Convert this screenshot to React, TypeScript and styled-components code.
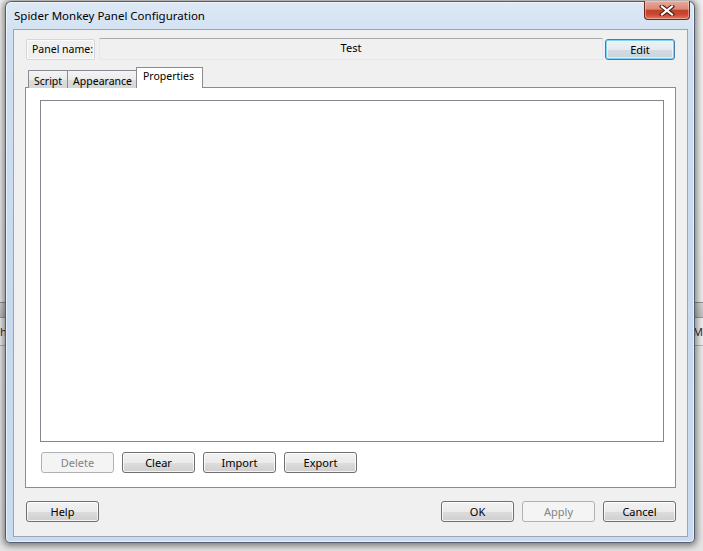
import React from 'react'
import styled, { createGlobalStyle, css } from 'styled-components'

const GlobalStyle = createGlobalStyle`
  *, *::before, *::after {
    box-sizing: border-box;
  }
  html, body {
    margin: 0;
    padding: 0;
  }
  body {
    background: #e6e6e6;
    font-family: "Noto Sans", "Open Sans", sans-serif;
  }
`

const uiFont = `"Noto Sans", "Open Sans", sans-serif`

const Desktop = styled.div`
  position: relative;
  width: 703px;
  height: 551px;
  overflow: hidden;
  background: linear-gradient(#efefef, #e4e4e4);
  display: flex;
  flex-direction: column;
`

const BackdropToolbar = styled.div`
  margin-top: 302px;
  height: 16px;
  background: linear-gradient(#d2d2d2, #bdbdbd);
  border-top: 1px solid #8e8e8e;
  border-bottom: 1px solid #9a9a9a;
`

const BackdropRow = styled.div`
  height: 28px;
  display: flex;
  align-items: center;
  justify-content: space-between;
  background: #ececec;
  border-bottom: 1px solid #b5b5b5;
  font-family: ${uiFont};
  font-size: 11px;
  color: #30243c;
`

const Window = styled.div`
  position: absolute;
  left: 5px;
  top: 1px;
  width: 690px;
  height: 542px;
  border: 1px solid rgba(40, 50, 60, 0.75);
  border-radius: 6px 6px 5px 5px;
  background: linear-gradient(180deg, #dde8f5 0px, #cfdff1 40px, #c6d9ef 300px, #c9dbf0 100%);
  box-shadow: 0 1px 6px 2px rgba(0, 0, 0, 0.45), inset 0 0 0 1px rgba(255, 255, 255, 0.6);
  padding: 0 6px 5px 7px;
  display: flex;
  flex-direction: column;
`

const TitleBar = styled.div`
  height: 27px;
  flex-shrink: 0;
  display: flex;
  align-items: flex-start;
`

const TitleText = styled.span`
  font-family: ${uiFont};
  font-size: 11.5px;
  color: #000;
  margin: 6px 0 0 1px;
  white-space: nowrap;
`

const CloseButton = styled.div`
  margin-left: auto;
  margin-right: -2px;
  margin-top: -1px;
  width: 46px;
  height: 19px;
  border: 1px solid #6b2a1f;
  border-top: none;
  border-radius: 0 0 4px 4px;
  background: linear-gradient(180deg, #e9a99a 0%, #d98a76 45%, #c0412a 52%, #c9482f 75%, #e07a5e 100%);
  box-shadow: inset 0 0 0 1px rgba(255, 220, 210, 0.45);
  display: flex;
  align-items: center;
  justify-content: center;
`

const Client = styled.div`
  flex: 1;
  background: #f0f0f0;
  border: 1px solid #99a6b6;
  display: flex;
  flex-direction: column;
  padding: 8px 11px 14px 11px;
  font-family: ${uiFont};
  font-size: 11px;
  color: #000;
`

const NameRow = styled.div`
  display: flex;
  align-items: center;
  padding-left: 1px;
  height: 22px;
`

const NameLabel = styled.div`
  width: 69px;
  height: 21px;
  border: 1px solid #d3d7db;
  border-radius: 2px;
  box-shadow: inset 0 0 0 1px #fbfbfb;
  display: flex;
  align-items: center;
  padding-left: 5px;
  margin-right: 4px;
  font-size: 10.5px;
  white-space: nowrap;
  flex-shrink: 0;
`

const NameField = styled.div`
  flex: 1;
  height: 22px;
  border: 1px solid #e3e9ef;
  border-top-color: #a9abb0;
  background: #f0f0f0;
  display: flex;
  align-items: center;
  justify-content: center;
  padding-bottom: 3px;
  font-size: 11px;
`

const Button = styled.button<{ $disabled?: boolean; $default?: boolean; $w?: number }>`
  width: ${p => p.$w ?? 73}px;
  height: 21px;
  padding: 0;
  font-family: ${uiFont};
  font-size: 11px;
  color: #000;
  border: 1px solid #707070;
  border-radius: 3px;
  background: linear-gradient(180deg, #f2f2f2 0%, #ebebeb 50%, #dddddd 51%, #cfcfcf 100%);
  box-shadow: inset 0 0 0 1px rgba(255, 255, 255, 0.75);
  display: flex;
  align-items: center;
  justify-content: center;
  flex-shrink: 0;

  ${p => p.$default && css`
    border-color: #3c7fb1;
    box-shadow: inset 0 0 0 1px #7fd3f5, inset 0 0 0 2px rgba(255, 255, 255, 0.5);
    background: linear-gradient(180deg, #eef3f6 0%, #e4eaee 50%, #d4dce2 51%, #c9d3da 100%);
  `}

  ${p => p.$disabled && css`
    border-color: #adb2b5;
    background: #f4f4f4;
    box-shadow: none;
    color: #838383;
  `}
`

const EditButton = styled(Button)`
  margin-left: 2px;
  margin-right: 1px;
`

const TabArea = styled.div`
  flex: 1;
  display: flex;
  flex-direction: column;
  margin-top: 7px;
`

const TabStrip = styled.div`
  display: flex;
  align-items: flex-end;
  height: 21px;
  padding-left: 3px;
  position: relative;
  z-index: 1;
  margin-bottom: -1px;
`

const Tab = styled.div<{ $active?: boolean }>`
  height: 18px;
  border: 1px solid #898c95;
  border-bottom: none;
  background: linear-gradient(180deg, #f4f4f4 0%, #ebebeb 50%, #dddddd 51%, #d6d6d6 100%);
  padding: 2px 5px 0 5px;
  margin-right: -1px;
  display: flex;
  align-items: center;
  font-size: 10.5px;
  white-space: nowrap;

  ${p => p.$active && css`
    height: 21px;
    background: #ffffff;
    margin-left: -1px;
    padding: 0 8px 4px 6px;
  `}
`

const TabPanel = styled.div`
  flex: 1;
  border: 1px solid #898c95;
  background: #ffffff;
  display: flex;
  flex-direction: column;
  padding: 12px 11px 14px 14px;
`

const ListBox = styled.div`
  flex: 1;
  border: 1px solid #828790;
  background: #ffffff;
`

const ButtonRow = styled.div`
  display: flex;
  gap: 8px;
  margin-top: 10px;
  padding-left: 1px;
`

const Footer = styled.div`
  display: flex;
  align-items: center;
  margin-top: 13px;
  padding-left: 1px;
`

const FooterRight = styled.div`
  margin-left: auto;
  display: flex;
  gap: 8px;
`

const CloseGlyph = () => (
  <svg width="16" height="11" viewBox="0 0 16 11">
    <path d="M3 1.5 L13 9.5 M13 1.5 L3 9.5" stroke="#4a1a12" strokeWidth="4.2" strokeLinecap="square" fill="none" />
    <path d="M3 1.5 L13 9.5 M13 1.5 L3 9.5" stroke="#ffffff" strokeWidth="2.2" strokeLinecap="square" fill="none" />
  </svg>
)

export default function App() {
  return (
    <>
      <GlobalStyle />
      <Desktop>
        <BackdropToolbar />
        <BackdropRow>
          <span>h</span>
          <span>M</span>
        </BackdropRow>

        <Window>
          <TitleBar>
            <TitleText>Spider Monkey Panel Configuration</TitleText>
            <CloseButton>
              <CloseGlyph />
            </CloseButton>
          </TitleBar>

          <Client>
            <NameRow>
              <NameLabel>Panel name:</NameLabel>
              <NameField>Test</NameField>
              <EditButton $default $w={70}>Edit</EditButton>
            </NameRow>

            <TabArea>
              <TabStrip>
                <Tab>Script</Tab>
                <Tab>Appearance</Tab>
                <Tab $active>Properties</Tab>
              </TabStrip>
              <TabPanel>
                <ListBox />
                <ButtonRow>
                  <Button $disabled>Delete</Button>
                  <Button>Clear</Button>
                  <Button>Import</Button>
                  <Button>Export</Button>
                </ButtonRow>
              </TabPanel>
            </TabArea>

            <Footer>
              <Button>Help</Button>
              <FooterRight>
                <Button>OK</Button>
                <Button $disabled>Apply</Button>
                <Button>Cancel</Button>
              </FooterRight>
            </Footer>
          </Client>
        </Window>
      </Desktop>
    </>
  )
}
